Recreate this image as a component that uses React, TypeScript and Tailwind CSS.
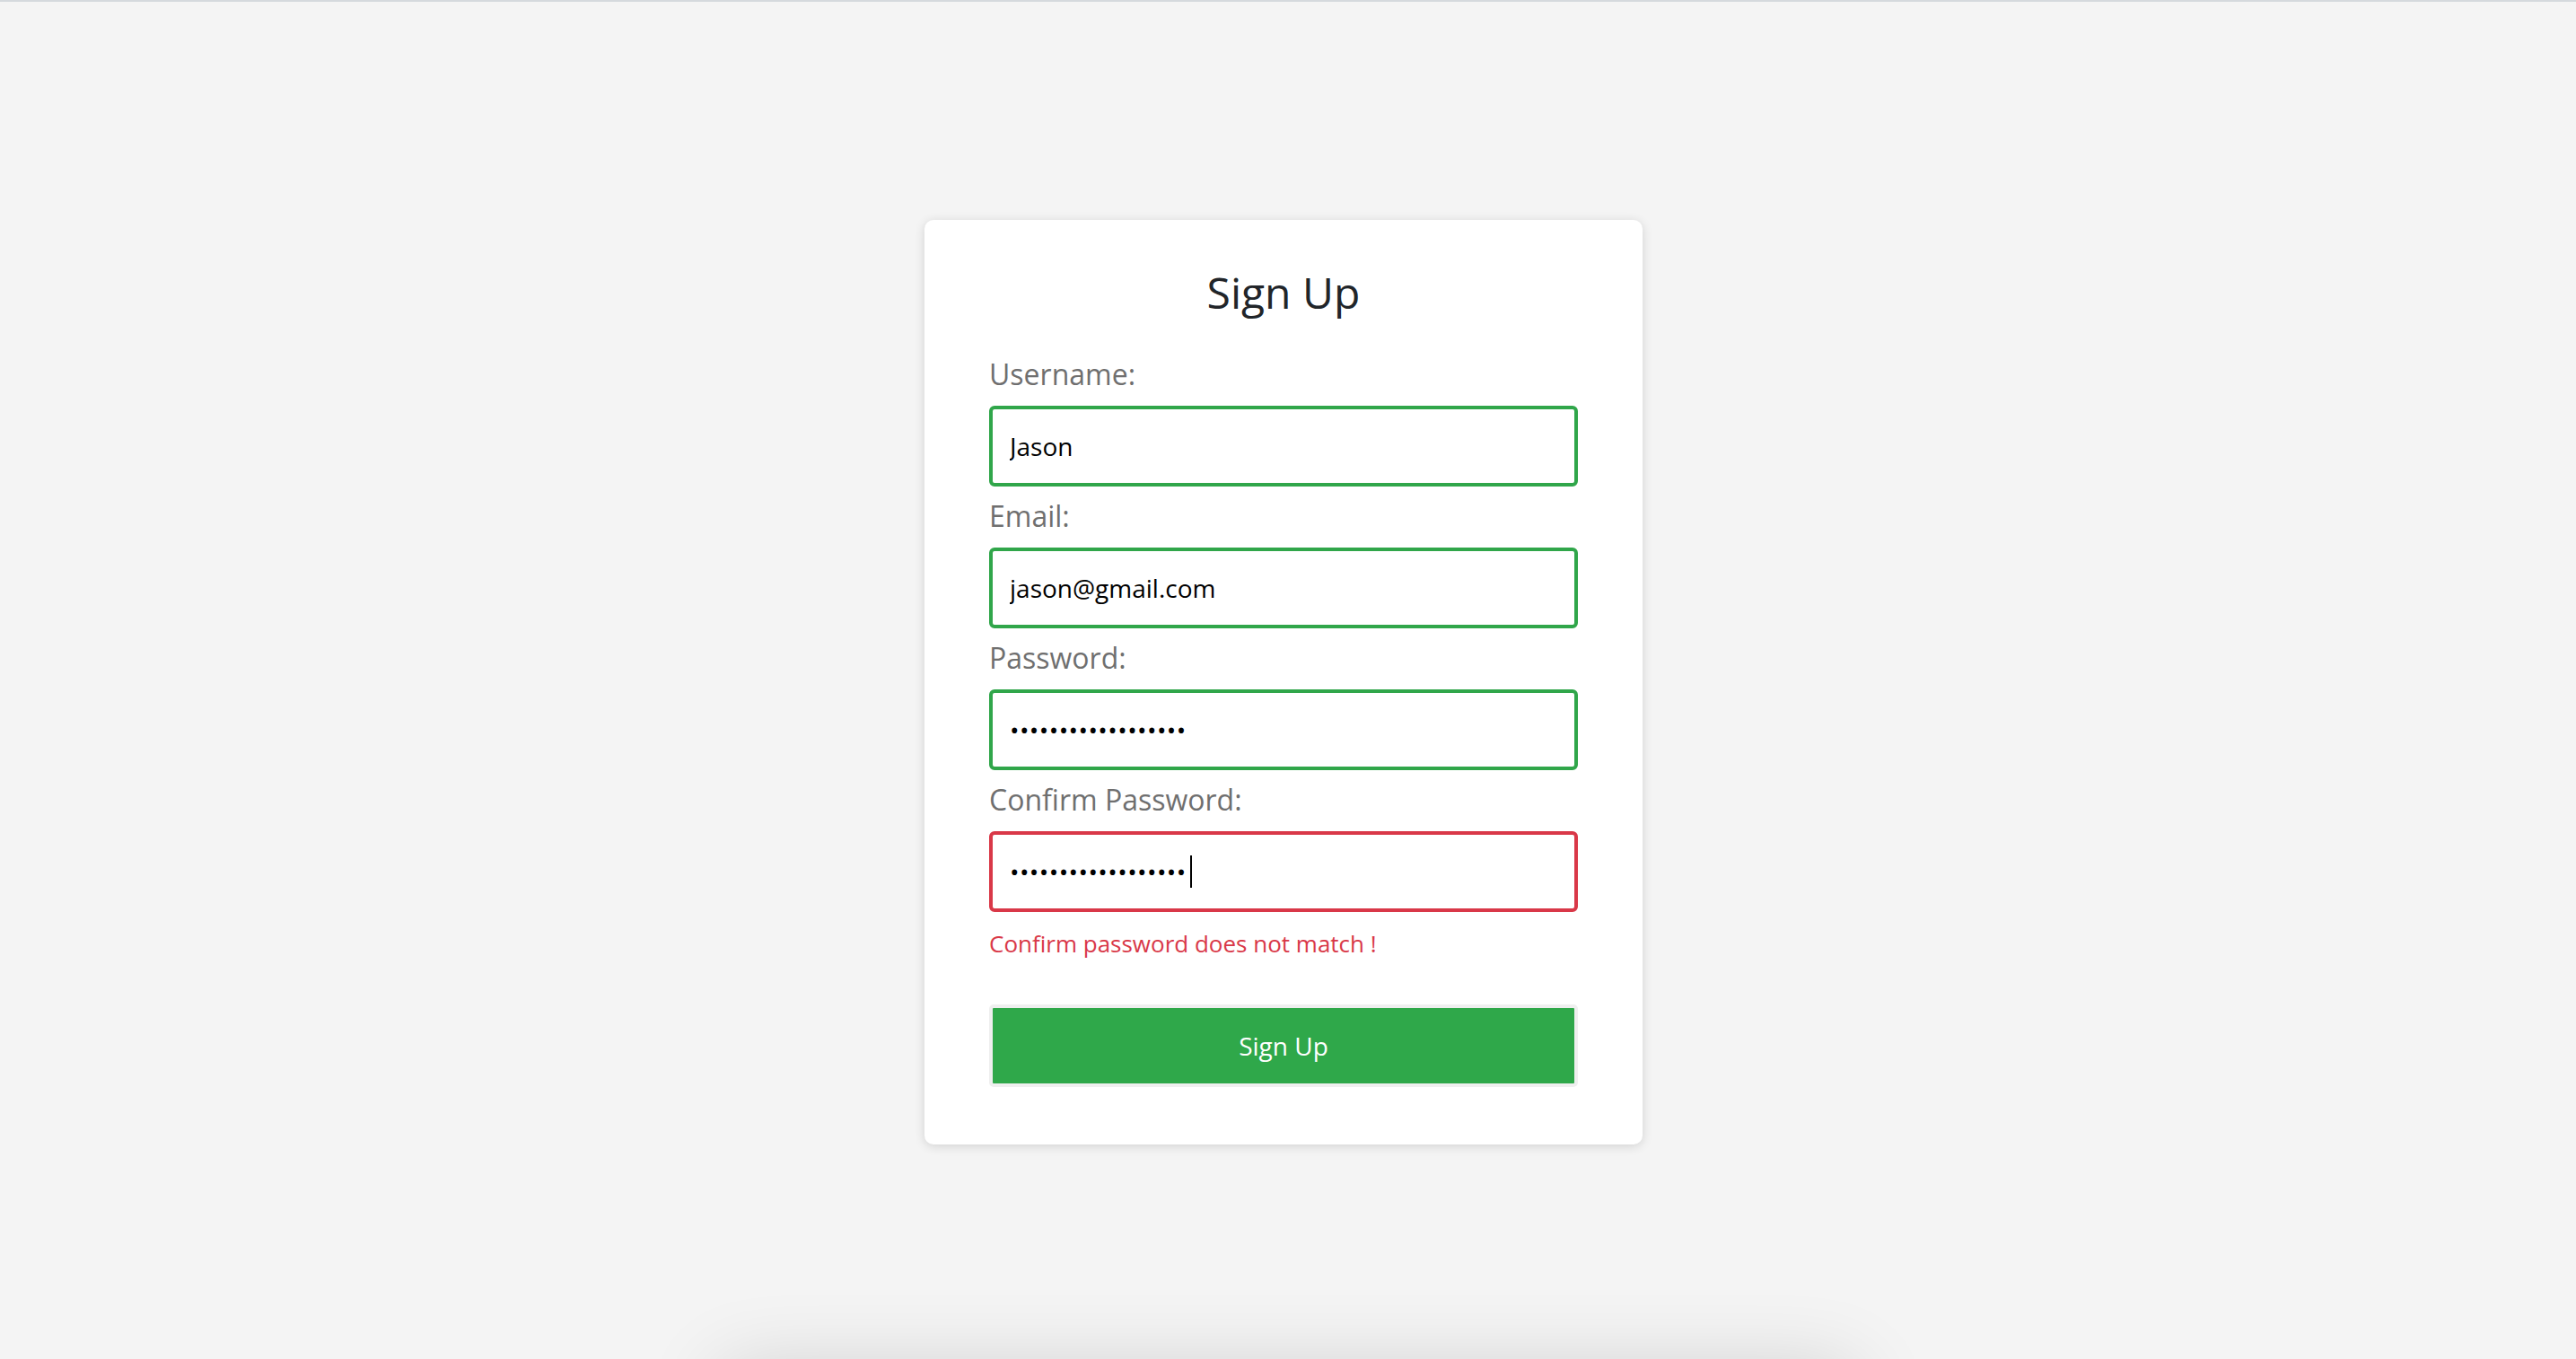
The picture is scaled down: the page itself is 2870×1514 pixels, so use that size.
import React from 'react';

type FieldProps = {
  label: string;
  type: string;
  value: string;
  invalid?: boolean;
  caret?: boolean;
};

const Field: React.FC<FieldProps> = ({ label, type, value, invalid, caret }) => (
  <div className="flex flex-col mb-[9px]">
    <label className="text-[32px] leading-[48px] text-[#6f6f6f] mb-[11px]">{label}</label>
    <div className="relative">
      <input
        type={type}
        defaultValue={value}
        readOnly
        className={`h-[90px] w-full rounded-[6px] border-4 bg-white px-[19px] text-[28px] text-black outline-none ${
          type === 'password' ? 'tracking-[0.4px]' : ''
        } ${invalid ? 'border-[#d93848]' : 'border-[#30a64a]'}`}
      />
      {/* text caret of the focused field */}
      {caret && <span className="absolute left-[224px] top-[27px] h-[36px] w-[2px] bg-black" />}
    </div>
  </div>
);

export default function App() {
  return (
    <div
      className="relative min-h-[1514px] overflow-hidden border-t-2 border-[#d5d9dd] bg-[#f4f4f4] flex flex-col items-center pt-[243px]"
      style={{ fontFamily: '"Open Sans", "Liberation Sans", sans-serif' }}
    >
      {/* Card */}
      <div className="ml-[-10px] w-[800px] rounded-[10px] bg-white px-[72px] pt-[52px] pb-[64px] shadow-[0_2px_12px_rgba(0,0,0,0.14)]">
        <h1 className="text-center text-[48px] leading-[58px] font-normal text-[#212529] mb-[38px]">Sign Up</h1>

        <Field label="Username:" type="text" value="Jason" />
        <Field label="Email:" type="email" value="jason@gmail.com" />
        <Field label="Password:" type="password" value="abcdefghijklmnopqr" />
        <Field label="Confirm Password:" type="password" value="abcdefghijklmnopqs" invalid caret />

        <p className="mt-[16px] text-[26px] leading-[39px] text-[#d93848]">Confirm password does not match !</p>

        <button className="mt-[48px] h-[92px] w-full rounded-[5px] border-4 border-[#efefef] bg-[#2fa84a] text-[28px] text-white">
          Sign Up
        </button>
      </div>

      {/* panel below the fold, only its shadow shows */}
      <div className="mt-[252px] h-[200px] w-[1260px] bg-[#f4f4f4] shadow-[0_0_90px_rgba(0,0,0,0.16)]" />
    </div>
  );
}
